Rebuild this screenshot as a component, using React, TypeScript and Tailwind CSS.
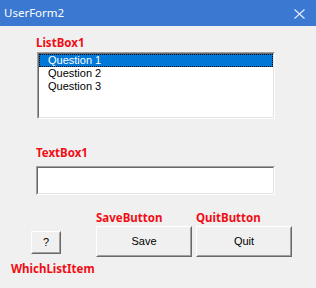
import React from "react";

const sans = { fontFamily: '"Liberation Sans", Arial, sans-serif' } as const;

function RedLabel({ children, className = "" }: { children: React.ReactNode; className?: string }) {
  return (
    <div
      className={`text-[11.5px] leading-[14px] font-bold text-[#f00d14] whitespace-nowrap ${className}`}
      style={{ fontFamily: '"Noto Sans", sans-serif' }}
    >
      {children}
    </div>
  );
}

function Button({ children, className = "" }: { children: React.ReactNode; className?: string }) {
  return (
    <div className={`border border-t-white border-l-white border-b-[#696969] border-r-[#696969] bg-[#f0f0f0] ${className}`}>
      <div className="w-full h-full border border-t-[#f0f0f0] border-l-[#f0f0f0] border-b-[#a0a0a0] border-r-[#a0a0a0] flex items-center justify-center text-[11px] text-black" style={sans}>
        {children}
      </div>
    </div>
  );
}

export default function App() {
  return (
    <div className="w-[316px] h-[288px] bg-[#f0f0f0] flex flex-col overflow-hidden">
      <div className="h-[26px] bg-[#3a78d1] flex items-center justify-between pl-[4px] pr-[11px] shrink-0">
        <span className="text-white text-[11.5px] leading-none" style={{ fontFamily: '"Noto Sans", sans-serif' }}>
          UserForm2
        </span>
        <svg width="11" height="10" viewBox="0 0 11 10" className="mt-[1px]">
          <path d="M0.5 0.5 L10.5 9.5 M10.5 0.5 L0.5 9.5" stroke="#e6eefa" strokeWidth="1.1" />
        </svg>
      </div>

      <div className="flex-1 flex flex-col">
        <div className="pl-[36px] mt-[10px]">
          <RedLabel>ListBox1</RedLabel>
        </div>
        <div className="ml-[37px] mt-[2px] w-[238px] h-[67px] border border-t-[#a0a0a0] border-l-[#a0a0a0] border-b-white border-r-white">
          <div className="w-full h-full border border-t-[#696969] border-l-[#696969] border-b-[#e3e3e3] border-r-[#e3e3e3] bg-white flex flex-col text-[11px] leading-[13px]" style={sans}>
            <div className="h-[13px] bg-[#0078d7] text-white border border-dotted border-black pl-[8px] leading-[11px]">
              Question 1
            </div>
            <div className="h-[13px] pl-[9px] text-black">Question 2</div>
            <div className="h-[13px] pl-[9px] text-black">Question 3</div>
          </div>
        </div>

        <div className="pl-[36px] mt-[27px]">
          <RedLabel>TextBox1</RedLabel>
        </div>
        <div className="ml-[36px] mt-[6px] w-[239px] h-[29px] border border-t-[#a0a0a0] border-l-[#a0a0a0] border-b-white border-r-white">
          <div className="w-full h-full border border-t-[#696969] border-l-[#696969] border-b-[#e3e3e3] border-r-[#e3e3e3] bg-white" />
        </div>

        <div className="flex mt-[16px] pl-[11px]">
          <div className="w-[85px] shrink-0 flex flex-col">
            <Button className="ml-[20px] mt-[20px] w-[30px] h-[23px]">?</Button>
            <RedLabel className="mt-[8px]">WhichListItem</RedLabel>
          </div>
          <div className="flex flex-col">
            <RedLabel>SaveButton</RedLabel>
            <Button className="mt-[1px] w-[96px] h-[31px]">Save</Button>
          </div>
          <div className="flex flex-col ml-[4px]">
            <RedLabel>QuitButton</RedLabel>
            <Button className="mt-[1px] w-[96px] h-[31px]">Quit</Button>
          </div>
        </div>
      </div>
    </div>
  );
}
